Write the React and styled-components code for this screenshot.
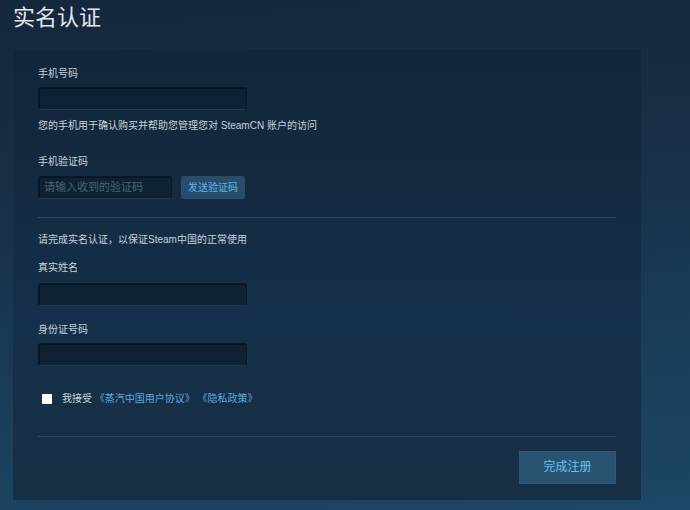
import React from "react";
import styled, { createGlobalStyle } from "styled-components";

const GlobalStyle = createGlobalStyle`
  html, body {
    margin: 0;
    padding: 0;
    height: 100%;
  }
  body {
    background: linear-gradient(175deg, #15273c 0%, #182f47 35%, #1a3d58 70%, #1c4766 100%);
    font-family: "Liberation Sans", "Noto Sans CJK SC", sans-serif;
    -webkit-font-smoothing: antialiased;
  }
`;

const Page = styled.div`
  width: 690px;
  height: 510px;
  overflow: hidden;
  padding: 0 13px;
  box-sizing: border-box;
`;

const Title = styled.h1`
  margin: 0;
  height: 50px;
  padding-top: 4px;
  box-sizing: border-box;
  font-size: 22px;
  line-height: 28px;
  font-weight: 400;
  color: #e4e8eb;
`;

const Panel = styled.div`
  width: 628px;
  height: 450px;
  box-sizing: border-box;
  padding: 17px 25px 16px;
  background: linear-gradient(180deg, #13253a 0%, #15304a 60%, #172f45 100%);
  display: flex;
  flex-direction: column;
`;

const Text = styled.div`
  font-size: 10px;
  line-height: 14px;
  color: #c7d3dc;
  margin-top: ${props => props.gap || 0}px;
`;

const Input = styled.div`
  box-sizing: border-box;
  width: ${props => props.width || 209}px;
  height: 23px;
  margin-top: ${props => props.gap || 0}px;
  border: 1px solid #0b1826;
  border-bottom-color: #1f3a50;
  border-radius: 3px;
  background: #0f2134;
  box-shadow: inset 1px 1px 0 rgba(0, 0, 0, 0.35);
  padding: 0 5px;
  font-size: 11px;
  line-height: 21px;
  color: #4d6174;
`;

const Row = styled.div`
  display: flex;
  align-items: center;
  gap: 9px;
  margin-top: ${props => props.gap || 0}px;
`;

const SmallButton = styled.div`
  height: 23px;
  padding: 0 7px;
  background: #274d6b;
  color: #5fb4e8;
  font-size: 10px;
  line-height: 23px;
  border-radius: 2px;
`;

const Divider = styled.div`
  height: 1px;
  background: #2a4a62;
  margin-top: ${props => props.gap || 0}px;
`;

const Check = styled.span`
  width: 10px;
  height: 10px;
  margin-left: 4px;
  background: #ffffff;
  border-radius: 1px;
`;

const Agree = styled.div`
  font-size: 10px;
  line-height: 14px;
  color: #c7d3dc;
  margin-left: 1px;
`;

const Link = styled.span`
  color: #5ca8dc;
`;

const Footer = styled.div`
  display: flex;
  justify-content: flex-end;
  margin-top: 14px;
`;

const SubmitButton = styled.div`
  width: 97px;
  height: 33px;
  box-sizing: border-box;
  background: #2a5372;
  border: 1px solid #2d5878;
  color: #67c1f5;
  font-size: 12px;
  line-height: 31px;
  text-align: center;
`;

export default function App() {
  return (
    <Page>
      <GlobalStyle />
      <Title>实名认证</Title>
      <Panel>
        <Text>手机号码</Text>
        <Input gap={6} />
        <Text gap={9}>您的手机用于确认购买并帮助您管理您对 SteamCN 账户的访问</Text>

        <Text gap={22}>手机验证码</Text>
        <Row gap={7}>
          <Input width={134}>请输入收到的验证码</Input>
          <SmallButton>发送验证码</SmallButton>
        </Row>

        <Divider gap={18} />

        <Text gap={15}>请完成实名认证，以保证Steam中国的正常使用</Text>
        <Text gap={14}>真实姓名</Text>
        <Input gap={8} />
        <Text gap={17}>身份证号码</Text>
        <Input gap={6} />

        <Row gap={26}>
          <Check />
          <Agree>
            我接受 <Link>《蒸汽中国用户协议》 《隐私政策》</Link>
          </Agree>
        </Row>

        <Divider gap={30} />

        <Footer>
          <SubmitButton>完成注册</SubmitButton>
        </Footer>
      </Panel>
    </Page>
  );
}
